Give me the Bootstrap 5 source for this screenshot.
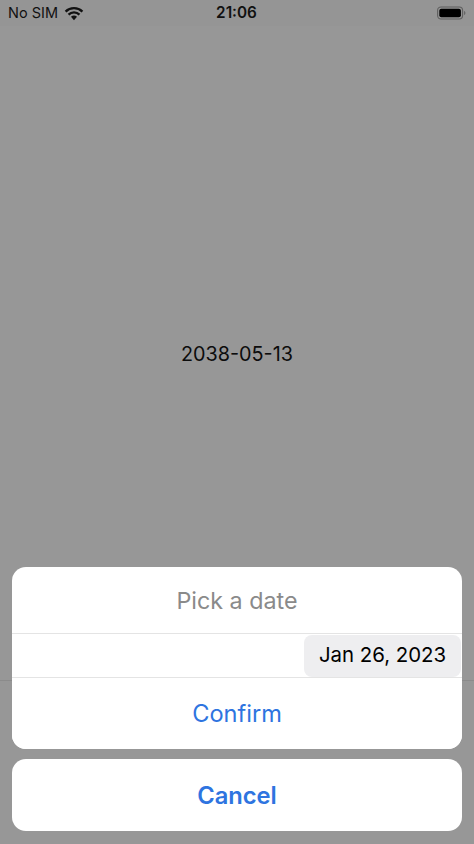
<!DOCTYPE html>
<html lang="en">
<head>
<meta charset="utf-8">
<title>Pick a date</title>
<link href="https://cdn.jsdelivr.net/npm/bootstrap@5.3.0/dist/css/bootstrap.min.css" rel="stylesheet">
<style>
html,body{height:844px;overflow:hidden}
body{background:#979797;font-family:Inter,"Liberation Sans",sans-serif;color:#000}
.screen{height:844px;position:relative}
.statusbar{height:26px;padding:0 8px;background:#959595;font-size:14.5px;color:#111}
.stat-side{width:140px}
.stat-left{gap:6px}
.stat-time{font-weight:600;font-size:15.3px;padding-right:1px}
.date-main{font-size:19.8px;color:#0c0c0c;line-height:24px;padding-top:2px}
.midzone{height:655px;border-bottom:1px solid #8b8b8b}
.sheet{position:absolute;left:12px;right:12px;bottom:13px;gap:10px}
.panel{background:#fff;border-radius:14px;overflow:hidden}
.title-row{height:67px;color:#8a8a8a;font-size:23.3px;border-bottom:1px solid #e4e4e4;padding-top:2px}
.picker-row{height:44px;border-bottom:1px solid #e4e4e4}
.date-chip{width:157px;height:42px;background:#eeeef0;border-radius:8px;font-size:20.4px;margin-right:1px}
.btn-sheet{background:#fff;border:0;border-radius:0;width:100%;color:#2e74e0;font-size:23.6px;height:71px;padding:0}
.btn-sheet:hover,.btn-sheet:active{background:#fff;color:#2e74e0}
.cancel-panel .btn-sheet{font-weight:600;font-size:23.7px;height:72px;padding-top:2px}
</style>
</head>
<body>
<div class="screen d-flex flex-column">
  <div class="statusbar d-flex align-items-center justify-content-between">
    <div class="stat-side stat-left d-flex align-items-center">
      <span>No SIM</span>
      <svg width="20" height="15" viewBox="0 0 19 14" aria-hidden="true"><path d="M1.500 5.200A11.500 11.500 0 0 1 17.500 5.200M4.300 8A7.500 7.500 0 0 1 14.700 8" fill="none" stroke="#111" stroke-width="2.200"/><path d="M6.600 10.200A4.200 4.200 0 0 1 12.400 10.200L9.500 13.400Z" fill="#111"/></svg>
    </div>
    <span class="stat-time">21:06</span>
    <div class="stat-side d-flex justify-content-end align-items-center">
      <svg width="29" height="14" viewBox="0 0 29 14" aria-hidden="true"><rect x=".6" y="1" width="25" height="12" rx="3.400" fill="none" stroke="#5f5f5f" stroke-width="1.100"/><rect x="2.300" y="2.700" width="21.600" height="8.600" rx="2" fill="#000"/><path d="M27 5v4c.9-.3 1.400-1.100 1.400-2S27.900 5.300 27 5Z" fill="#666"/></svg>
    </div>
  </div>
  <div class="midzone d-flex align-items-center justify-content-center">
    <span class="date-main">2038-05-13</span>
  </div>
  <div class="sheet d-flex flex-column">
    <div class="panel">
      <div class="title-row d-flex align-items-center justify-content-center">Pick a date</div>
      <div class="picker-row d-flex justify-content-end align-items-center">
        <div class="date-chip d-flex align-items-center justify-content-center">Jan 26, 2023</div>
      </div>
      <button type="button" class="btn btn-sheet">Confirm</button>
    </div>
    <div class="panel cancel-panel">
      <button type="button" class="btn btn-sheet">Cancel</button>
    </div>
  </div>
</div>
</body>
</html>
